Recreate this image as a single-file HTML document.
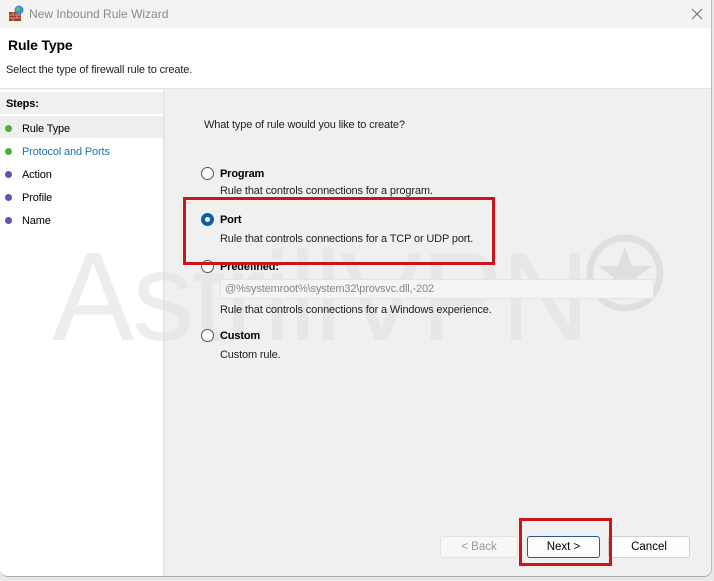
<!DOCTYPE html>
<html><head><meta charset="utf-8"><style>
*{margin:0;padding:0;box-sizing:border-box}
body{width:714px;height:581px;overflow:hidden;background:#e8e8e8;font-family:"Liberation Sans",sans-serif;font-size:11px;color:#000;position:relative}
.win{position:absolute;left:0;top:0;width:712px;height:577px;background:#f0f0f0;border-right:1px solid #bbb;border-bottom:1px solid #aaa;border-radius:0 0 8px 8px;overflow:hidden}
.title{position:absolute;left:0;top:0;width:712px;height:28px;background:#f3f3f3}
.title span{position:absolute;left:29px;top:7px;font-size:12px;color:#8a8a8a}
.hdr{position:absolute;left:0;top:28px;width:712px;height:61px;background:#fff;border-bottom:1px solid #e3e3e3}
.left{position:absolute;left:0;top:90px;width:165px;height:490px;background:#fff;border-right:2px solid #e6e6e6}
.t{position:absolute;white-space:nowrap;letter-spacing:-0.15px;margin-top:2px}
.dot{position:absolute;left:5px;width:7px;height:7px;border-radius:50%}
.radio{position:absolute;left:201px;width:13px;height:13px;border:1px solid #555;border-radius:50%;background:#fff}
.btn{position:absolute;top:536px;height:22px;border:1px solid #d0d0d0;border-radius:3px;background:#fdfdfd;text-align:center;line-height:21px;font-size:11.5px}
.red{position:absolute;border:3px solid #d0121b}
</style></head><body>
<div class="win">
<div class="title">
<svg style="position:absolute;left:8px;top:5px" width="17" height="17" viewBox="0 0 17 17"><rect x="1" y="7" width="12" height="9" fill="#a33b2a"/><path d="M1 10h12M1 13h12M5 7v3M9 10v3M5 13v3" stroke="#e0b0a0" stroke-width="0.8"/><circle cx="11" cy="5" r="4.5" fill="#3b8fd6"/><circle cx="10" cy="4" r="2" fill="#6cc04a"/></svg>
<span>New Inbound Rule Wizard</span>
<svg style="position:absolute;left:691px;top:8px" width="12" height="12"><path d="M1 1L11 11M11 1L1 11" stroke="#777" stroke-width="1.2"/></svg>
</div>
<div class="hdr">
<div class="t" style="left:8px;top:7px;font-size:14px;font-weight:bold">Rule Type</div>
<div class="t" style="left:6px;top:34px;color:#222">Select the type of firewall rule to create.</div>
</div>
<div class="left">
<div style="position:absolute;left:0;top:2px;width:163px;height:22px;background:#f0f0f0"></div>
<div class="t" style="left:6px;top:6px;font-weight:bold">Steps:</div>
<div style="position:absolute;left:0;top:26px;width:163px;height:22px;background:#eeeeee"></div>
<div class="dot" style="top:35px;background:#4caf3a"></div><div class="t" style="left:22px;top:31px">Rule Type</div>
<div class="dot" style="top:58px;background:#4caf3a"></div><div class="t" style="left:22px;top:54px;color:#1f6fb8">Protocol and Ports</div>
<div class="dot" style="top:81px;background:#5b55b5"></div><div class="t" style="left:22px;top:77px">Action</div>
<div class="dot" style="top:104px;background:#5b55b5"></div><div class="t" style="left:22px;top:100px">Profile</div>
<div class="dot" style="top:127px;background:#5b55b5"></div><div class="t" style="left:22px;top:123px">Name</div>
</div>
<div class="t" style="left:52px;top:222px;font-size:126px;color:#e2e2e2;opacity:.6;transform:scaleX(0.98);transform-origin:0 0;letter-spacing:-2px">AstrillVPN</div>
<svg style="position:absolute;left:585px;top:233px;opacity:.5" width="80" height="80" viewBox="0 0 80 80"><circle cx="40" cy="40" r="35" fill="none" stroke="#d0d0d0" stroke-width="7"/><path d="M40 14L47 33L67 33L51 45L57 65L40 53L23 65L29 45L13 33L33 33Z" fill="#d0d0d0"/></svg>
<div class="t" style="left:204px;top:117px;color:#222">What type of rule would you like to create?</div>
<div class="radio" style="top:167px"></div>
<div class="t" style="left:220px;top:166px;font-weight:bold">Program</div>
<div class="t" style="left:220px;top:183px;color:#222">Rule that controls connections for a program.</div>
<div class="radio" style="top:213px;border:4px solid #0f5ca8"></div>
<div class="t" style="left:220px;top:212px;font-weight:bold">Port</div>
<div class="t" style="left:220px;top:231px;color:#222">Rule that controls connections for a TCP or UDP port.</div>
<div class="radio" style="top:260px"></div>
<div class="t" style="left:220px;top:259px;font-weight:bold">Predefined:</div>
<div style="position:absolute;left:220px;top:279px;width:434px;height:20px;background:#f4f4f4;border:1px solid #e4e4e4"></div>
<div class="t" style="left:225px;top:281px;color:#888">@%systemroot%\system32\provsvc.dll,-202</div>
<div class="t" style="left:220px;top:302px;color:#222">Rule that controls connections for a Windows experience.</div>
<div class="radio" style="top:329px"></div>
<div class="t" style="left:220px;top:328px;font-weight:bold">Custom</div>
<div class="t" style="left:220px;top:347px;color:#222">Custom rule.</div>
<div class="red" style="left:183px;top:197px;width:312px;height:68px"></div>
<div class="btn" style="left:440px;width:78px;color:#999;background:#f7f7f7;border-color:#e2e2e2">&lt; Back</div>
<div class="btn" style="left:527px;width:73px;border-color:#2a5a8a">Next &gt;</div>
<div class="btn" style="left:608px;width:82px">Cancel</div>
<div class="red" style="left:519px;top:518px;width:93px;height:48px"></div>
</div>
</body></html>
